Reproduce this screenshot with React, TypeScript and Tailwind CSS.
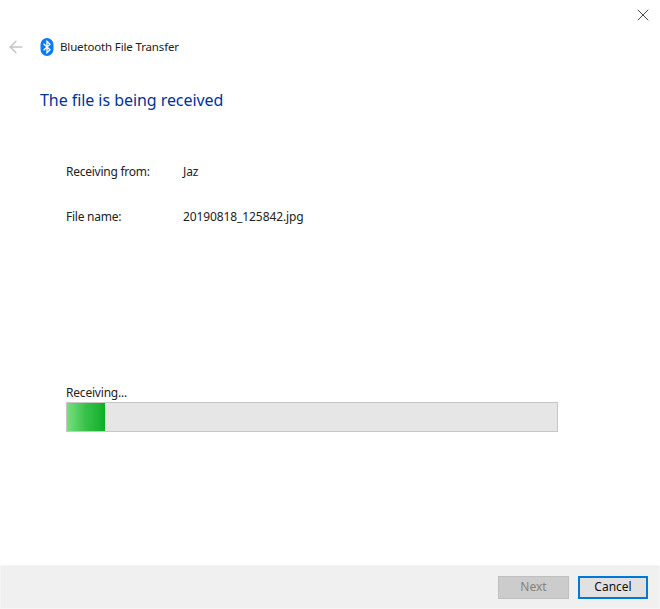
import { ArrowLeft, X } from 'lucide-react';

function BluetoothBadge() {
  return (
    <svg width="14" height="18" viewBox="0 0 14 18" className="shrink-0">
      <rect x="0.5" y="0" width="13" height="18" rx="6.5" fill="#0a7cf0" />
      <path d="M3.6 5.8 L10 11.8 L7 14.8 V3.2 L10 6.2 L3.6 12.2" fill="none" stroke="#fff" strokeWidth="1.3" />
    </svg>
  );
}

function Field({ label, value }: { label: string; value: string }) {
  return (
    <div className="flex h-[17px] items-center text-[12px] leading-[17px] text-[#222]">
      <span className="w-[117px] tracking-[-0.25px]">{label}</span>
      <span className="tracking-[-0.1px]">{value}</span>
    </div>
  );
}

export default function App() {
  return (
    <div className="flex h-[609px] w-[660px] flex-col bg-white font-['Noto_Sans',sans-serif]">
      <div className="flex justify-end pt-[5px] pr-[7px]">
        <X size={20} strokeWidth={1} className="text-[#222]" />
      </div>

      <div className="mt-[13px] flex h-[18px] items-center">
        <ArrowLeft size={20} strokeWidth={1.6} className="ml-[6px] text-[#c4c4c4]" />
        <div className="ml-[14px]"><BluetoothBadge /></div>
        <span className="ml-[6px] text-[11.5px] tracking-[-0.15px] text-[#222]">Bluetooth File Transfer</span>
      </div>

      <h1 className="mt-[33px] ml-[40px] text-[16px] leading-[22px] font-normal tracking-[-0.06px] text-[#003399]">
        The file is being received
      </h1>

      <div className="mt-[52px] ml-[66px] flex flex-col gap-[28px]">
        <Field label="Receiving from:" value="Jaz" />
        <Field label="File name:" value="20190818_125842.jpg" />
      </div>

      <div className="mt-[159px] ml-[66px] w-[492px]">
        <div className="h-[18px] text-[12px] leading-[17px] tracking-[-0.2px] text-[#222]">Receiving...</div>
        <div className="h-[30px] border border-[#c6c6c6] bg-[#e6e6e6]">
          <div className="h-full w-[38px] bg-gradient-to-r from-[#74e07f] via-[#35c04a] to-[#06b025]" />
        </div>
      </div>

      <div className="mt-auto flex h-[44px] items-center justify-end gap-[9px] border border-[#f5f5f5] bg-[#f0f0f0] pr-[11px]">
        <button className="h-[23px] w-[71px] border border-[#bfbfbf] bg-[#cccccc] text-[12px] text-[#838383]">Next</button>
        <button className="h-[23px] w-[70px] border-2 border-[#0078d7] bg-[#e1e1e1] text-[12px] text-[#111]">Cancel</button>
      </div>
    </div>
  );
}
